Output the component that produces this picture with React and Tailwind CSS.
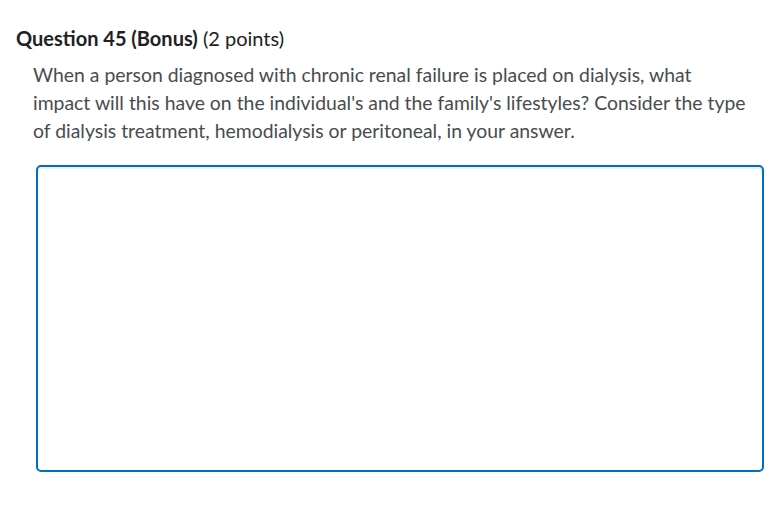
import React from 'react';

export default function App() {
  return (
    <div className="w-[778px] h-[509px] bg-white font-['Lato','Noto_Sans',sans-serif] text-[#494c4e]">
      <div className="pt-[26px] pl-4">
        <h2 className="text-[20px] leading-[24px] text-[#202122]">
          <span className="font-bold">Question 45 (Bonus)</span>{' '}
          <span className="font-normal">(2 points)</span>
        </h2>
      </div>
      <div className="pl-[33px] pt-[11px]">
        <p className="text-[19.4px] leading-[28px] w-[718px]">
          When a person diagnosed with chronic renal failure is placed on dialysis, what impact will this have on the individual's and the family's lifestyles? Consider the type of dialysis treatment, hemodialysis or peritoneal, in your answer.
        </p>
        <div className="mt-[20px] ml-[3px] w-[728px] h-[307px] rounded-[5px] border-2 border-[#006fbf] shadow-[inset_0_2px_0_0_#f0f0f0]" />
      </div>
    </div>
  );
}
